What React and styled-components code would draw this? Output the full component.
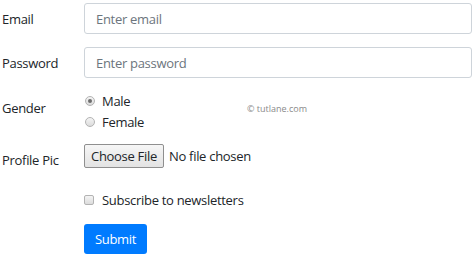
import React from "react";
import styled, { createGlobalStyle } from "styled-components";

const GlobalStyle = createGlobalStyle`
  html, body { margin: 0; padding: 0; background: #fff; }
  body { font-family: "Open Sans", "Noto Sans", sans-serif; color: #212529; }
  * { box-sizing: border-box; }
`;

const Form = styled.form`
  position: relative;
  width: 474px;
  height: 255px;
  padding: 3px 2px 0 2px;
  font-size: 13px;
  letter-spacing: -0.3px;
`;

const Row = styled.div`
  display: flex;
  align-items: ${(p) => (p.$top ? "flex-start" : "center")};
  margin-top: ${(p) => p.$mt || 0}px;
  padding-left: ${(p) => (p.$offset ? 82 : 0)}px;
`;

const Label = styled.label`
  flex: none;
  width: 82px;
  line-height: 20px;
  padding-top: ${(p) => p.$pt || 0}px;
  color: #212529;
`;

const TextInput = styled.input`
  flex: 1;
  min-width: 0;
  height: 31px;
  border: 1px solid #ced4da;
  border-radius: 3px;
  padding: 0 11px;
  font: inherit;
  font-size: 13px;
  letter-spacing: -0.3px;
  color: #495057;
  outline: none;
  &::placeholder { color: #6c757d; }
`;

const RadioGroup = styled.div`
  display: flex;
  flex-direction: column;
`;

const Option = styled.label`
  display: flex;
  align-items: center;
  height: ${(p) => p.$h || 21}px;
  gap: 7px;
  line-height: 20px;
`;

const Radio = styled.input.attrs({ type: "radio" })`
  appearance: none;
  margin: 0 0 0 1px;
  width: 10px;
  height: 10px;
  border-radius: 50%;
  border: 1px solid #b3b3b3;
  background: linear-gradient(#f4f4f4, #dcdcdc);
  position: relative;
  &:checked::after {
    content: "";
    position: absolute;
    left: 2px;
    top: 2px;
    width: 4px;
    height: 4px;
    border-radius: 50%;
    background: #6d6d6d;
  }
`;

const Checkbox = styled.input.attrs({ type: "checkbox" })`
  appearance: none;
  margin: 0 1px 0 0;
  width: 10px;
  height: 10px;
  border-radius: 2px;
  border: 1px solid #b3b3b3;
  background: linear-gradient(#f4f4f4, #dcdcdc);
`;

const FileButton = styled.button`
  height: 24px;
  width: 80px;
  padding: 0;
  border: 1px solid #8f8f8f;
  border-radius: 2px;
  background: linear-gradient(#f6f6f6, #e3e3e3);
  font: inherit;
  font-size: 13px;
  letter-spacing: -0.3px;
  color: #212529;
`;

const FileText = styled.span`
  margin-left: 5px;
  line-height: 24px;
`;

const Submit = styled.button`
  height: 30px;
  width: 63px;
  padding: 0;
  border: none;
  border-radius: 3px;
  background: #007bff;
  color: #fff;
  font: inherit;
  font-size: 13px;
  letter-spacing: -0.3px;
`;

const Watermark = styled.span`
  position: absolute;
  left: 247px;
  top: 102px;
  font-size: 9px;
  letter-spacing: 0;
  color: #8a8a8a;
`;

export default function App() {
  return (
    <>
      <GlobalStyle />
      <Form onSubmit={(e) => e.preventDefault()}>
        <Row>
          <Label>Email</Label>
          <TextInput type="email" placeholder="Enter email" />
        </Row>
        <Row $mt={13}>
          <Label>Password</Label>
          <TextInput type="password" placeholder="Enter password" />
        </Row>
        <Row $top $mt={12}>
          <Label $pt={8}>Gender</Label>
          <RadioGroup>
            <Option>
              <Radio name="gender" defaultChecked />
              Male
            </Option>
            <Option>
              <Radio name="gender" />
              Female
            </Option>
          </RadioGroup>
        </Row>
        <Row $top $mt={12}>
          <Label $pt={6}>Profile Pic</Label>
          <FileButton type="button">Choose File</FileButton>
          <FileText>No file chosen</FileText>
        </Row>
        <Row $offset $mt={20}>
          <Option $h={20}>
            <Checkbox />
            Subscribe to newsletters
          </Option>
        </Row>
        <Row $offset $mt={14}>
          <Submit type="submit">Submit</Submit>
        </Row>
        <Watermark>© tutlane.com</Watermark>
      </Form>
    </>
  );
}
